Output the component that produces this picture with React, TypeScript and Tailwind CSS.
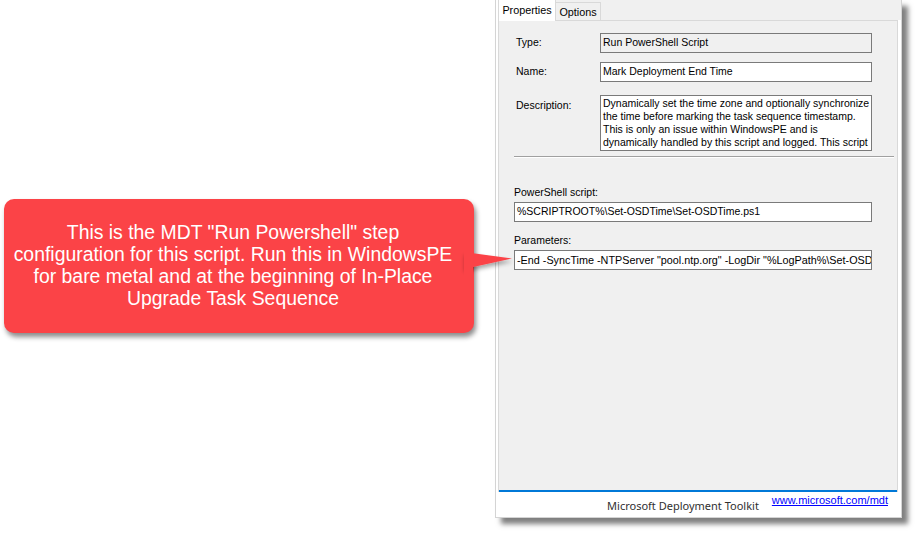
import React from "react";

const sans = { fontFamily: '"Liberation Sans", Arial, sans-serif' };

export default function App() {
  return (
    <div className="w-[916px] h-[533px] bg-white flex overflow-hidden" style={sans}>
      {/* Callout column */}
      <div className="w-[495px] shrink-0 pt-[199px] pl-[4px] relative z-10">
        <div className="relative w-[470px] h-[134px] rounded-[10px] bg-[#fb4347] shadow-[2px_4px_5px_rgba(0,0,0,0.45)] flex items-center justify-center pr-[12px]">
          <p className="text-white text-[19.4px] leading-[22px] text-center -mt-[3px] whitespace-nowrap">
            This is the MDT "Run Powershell" step
            <br />
            configuration for this script. Run this in WindowsPE
            <br />
            for bare metal and at the beginning of In-Place
            <br />
            Upgrade Task Sequence
          </p>
          <svg
            className="absolute left-[460px] top-[45px] overflow-visible"
            width="50"
            height="32"
            viewBox="0 0 50 32"
          >
            <defs>
              <filter id="tsh" x="-20%" y="-50%" width="150%" height="250%">
                <feDropShadow dx="1" dy="3" stdDeviation="2" floodColor="#000" floodOpacity="0.35" />
              </filter>
            </defs>
            <polygon points="0,8 48,14.5 0,25" fill="#fb4347" filter="url(#tsh)" />
            <rect x="0" y="0" width="9" height="32" fill="#fb4347" />
          </svg>
        </div>
      </div>

      {/* Dialog */}
      <div className="w-[407px] h-[518px] shrink-0 bg-white border border-t-0 border-[#d4d4d4] shadow-[6px_6px_5px_rgba(0,0,0,0.5)] flex flex-col text-[10.5px] text-black">
        {/* Tabs */}
        <div className="flex h-[20px] pl-[2px] relative z-10">
          <div className="w-[58px] h-[21px] bg-white border-x border-[#d9d9d9] flex items-center justify-center pb-[1px] text-[10.8px]">
            Properties
          </div>
          <div className="flex-1 flex bg-[#f0f0f0]">
            <div className="w-[45px] h-[18px] mt-[2px] border-t border-r border-[#d9d9d9] bg-[#f0f0f0] flex items-center justify-center pt-[1px] text-[10.8px]">
              Options
            </div>
          </div>
        </div>

        {/* Panel */}
        <div className="ml-[2px] mr-[3px] h-[472px] bg-[#f0f0f0] border border-b-0 border-[#d9d9d9] flex flex-col">
          <div className="flex-1 flex flex-col">
            {/* Type */}
            <div className="flex items-center mt-[12px] pl-[17px]">
              <div className="w-[84px]">Type:</div>
              <div className="w-[272px] h-[20px] border border-[#7a7a7a] bg-[#f0f0f0] px-[2px] flex items-center whitespace-nowrap overflow-hidden">
                Run PowerShell Script
              </div>
            </div>
            {/* Name */}
            <div className="flex items-center mt-[9px] pl-[17px]">
              <div className="w-[84px]">Name:</div>
              <div className="w-[272px] h-[20px] border border-[#7a7a7a] bg-white px-[2px] flex items-center whitespace-nowrap overflow-hidden">
                Mark Deployment End Time
              </div>
            </div>
            {/* Description */}
            <div className="flex items-start mt-[13px] pl-[17px]">
              <div className="w-[84px] pt-[3px]">Description:</div>
              <div className="w-[272px] h-[56px] border border-[#7a7a7a] bg-white px-[2px] pt-[1px] overflow-hidden leading-[13px] whitespace-nowrap">
                <div>Dynamically set the time zone and optionally synchronize</div>
                <div>the time before marking the task sequence timestamp.</div>
                <div>This is only an issue within WindowsPE and is</div>
                <div>dynamically handled by this script and logged. This script</div>
              </div>
            </div>
            {/* Separator */}
            <div className="ml-[15px] mr-[3px] mt-[5px] border-t border-b border-t-[#a0a0a0] border-b-white" />

            {/* PowerShell script */}
            <div className="ml-[15px] mt-[28px] leading-[13px]">PowerShell script:</div>
            <div className="ml-[15px] mt-[3px] w-[358px] h-[20px] border border-[#7a7a7a] bg-white px-[2px] flex items-center whitespace-nowrap overflow-hidden">
              %SCRIPTROOT%\Set-OSDTime\Set-OSDTime.ps1
            </div>

            {/* Parameters */}
            <div className="ml-[15px] mt-[12px] leading-[13px]">Parameters:</div>
            <div className="ml-[15px] mt-[3px] w-[358px] h-[20px] border border-[#7a7a7a] bg-white px-[2px] flex items-center whitespace-nowrap overflow-hidden text-[10.8px]">
              -End -SyncTime -NTPServer "pool.ntp.org" -LogDir "%LogPath%\Set-OSD
            </div>
          </div>
          <div className="h-[2px] bg-[#0078d7]" />
        </div>

        {/* Footer */}
        <div className="flex-1 flex justify-end items-start pr-[13px] gap-[13px]">
          <div
            className="text-[11px] text-[#303030] mt-[6px] leading-[15px]"
            style={{ fontFamily: '"Noto Sans", "Open Sans", sans-serif' }}
          >
            Microsoft Deployment Toolkit
          </div>
          <a href="#" className="text-[11px] text-[#0000ff] underline leading-[13px] mt-[2px]">
            www.microsoft.com/mdt
          </a>
        </div>
      </div>
    </div>
  );
}
